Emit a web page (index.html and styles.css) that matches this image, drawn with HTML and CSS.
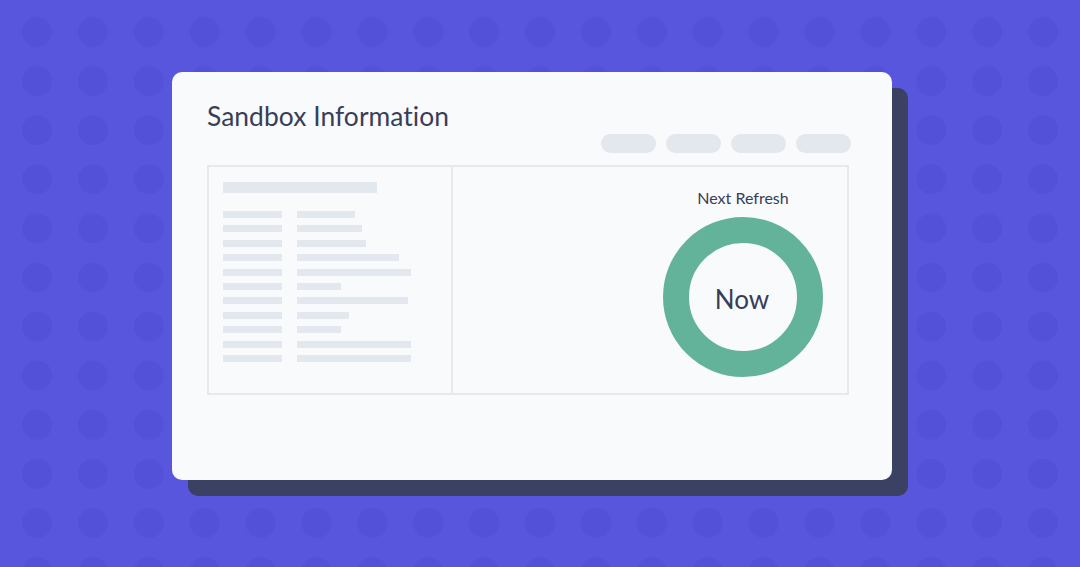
FILE: index.html
```html
<!DOCTYPE html>
<html>
<head>
<meta charset="utf-8">
<link rel="stylesheet" href="styles.css">
</head>
<body>
<div class="stage">
  <div class="card">
    <h1 class="title">Sandbox Information</h1>
    <div class="pills">
      <span class="pill"></span><span class="pill"></span><span class="pill"></span><span class="pill"></span>
    </div>
    <div class="table">
      <div class="left">
        <div class="head-bar"></div>
        <div class="rows">
          <div class="row"><span class="lab"></span><span class="val" style="width:58px"></span></div>
          <div class="row"><span class="lab"></span><span class="val" style="width:65px"></span></div>
          <div class="row"><span class="lab"></span><span class="val" style="width:69px"></span></div>
          <div class="row"><span class="lab"></span><span class="val" style="width:102px"></span></div>
          <div class="row"><span class="lab"></span><span class="val" style="width:114px"></span></div>
          <div class="row"><span class="lab"></span><span class="val" style="width:44px"></span></div>
          <div class="row"><span class="lab"></span><span class="val" style="width:111px"></span></div>
          <div class="row"><span class="lab"></span><span class="val" style="width:52px"></span></div>
          <div class="row"><span class="lab"></span><span class="val" style="width:44px"></span></div>
          <div class="row"><span class="lab"></span><span class="val" style="width:114px"></span></div>
          <div class="row"><span class="lab"></span><span class="val" style="width:114px"></span></div>
        </div>
      </div>
      <div class="right">
        <div class="refresh">
          <div class="refresh-label">Next Refresh</div>
          <div class="ring"><span class="ring-text">Now</span></div>
        </div>
      </div>
    </div>
  </div>
</div>
</body>
</html>
```
FILE: styles.css
```css
html, body {
  margin: 0;
  padding: 0;
}
body {
  width: 1080px;
  height: 567px;
  overflow: hidden;
  background-color: #5856DD;
  background-image: radial-gradient(circle at center, #5251D8 0, #5251D8 14.5px, rgba(82,81,216,0) 15.5px);
  background-size: 55.9px 49.1px;
  background-position: 9.05px 7.45px;
  font-family: Lato, "Open Sans", sans-serif;
  color: #373D57;
}
.stage {
  padding: 72px 0 0 172px;
}
.card {
  box-sizing: border-box;
  width: 720px;
  height: 408px;
  background: #F9FAFC;
  border-radius: 10px;
  box-shadow: 16px 16px 0 0 #3A4162;
  padding: 28px 41px 0 35px;
}
.title {
  margin: 0;
  font-size: 26.4px;
  line-height: 32px;
  font-weight: 400;
  letter-spacing: 0.05px;
  color: #383E58;
}
.pills {
  display: flex;
  justify-content: flex-end;
  gap: 10px;
  margin-top: 2px;
}
.pill {
  width: 55px;
  height: 19px;
  border-radius: 10px;
  background: #E3E8EF;
}
.table {
  box-sizing: border-box;
  display: flex;
  width: 642px;
  height: 230px;
  margin-top: 12px;
  border: 2px solid #E6E9EE;
}
.left {
  box-sizing: border-box;
  width: 244px;
  border-right: 2px solid #E6E9EE;
  padding: 15px 0 0 14px;
}
.head-bar {
  width: 154px;
  height: 11px;
  background: #E3E8EF;
}
.rows {
  display: flex;
  flex-direction: column;
  gap: 7.4px;
  margin-top: 18px;
}
.row {
  display: flex;
  gap: 15px;
  height: 7px;
}
.lab {
  width: 59px;
  height: 7px;
  background: #E3E8EF;
}
.val {
  height: 7px;
  background: #E3E8EF;
}
.right {
  flex: 1;
  display: flex;
  justify-content: flex-end;
  padding: 21px 24px 0 0;
}
.refresh {
  display: flex;
  flex-direction: column;
  align-items: center;
}
.refresh-label {
  font-size: 16px;
  line-height: 20px;
  color: #373D57;
}
.ring {
  box-sizing: border-box;
  width: 160px;
  height: 160px;
  margin-top: 9px;
  border-radius: 50%;
  border: 26px solid #62B39A;
  display: flex;
  align-items: center;
  justify-content: center;
}
.ring-text {
  font-size: 26px;
  line-height: 32px;
  padding-top: 3px;
  margin-left: -2px;
  color: #373D57;
}
```
